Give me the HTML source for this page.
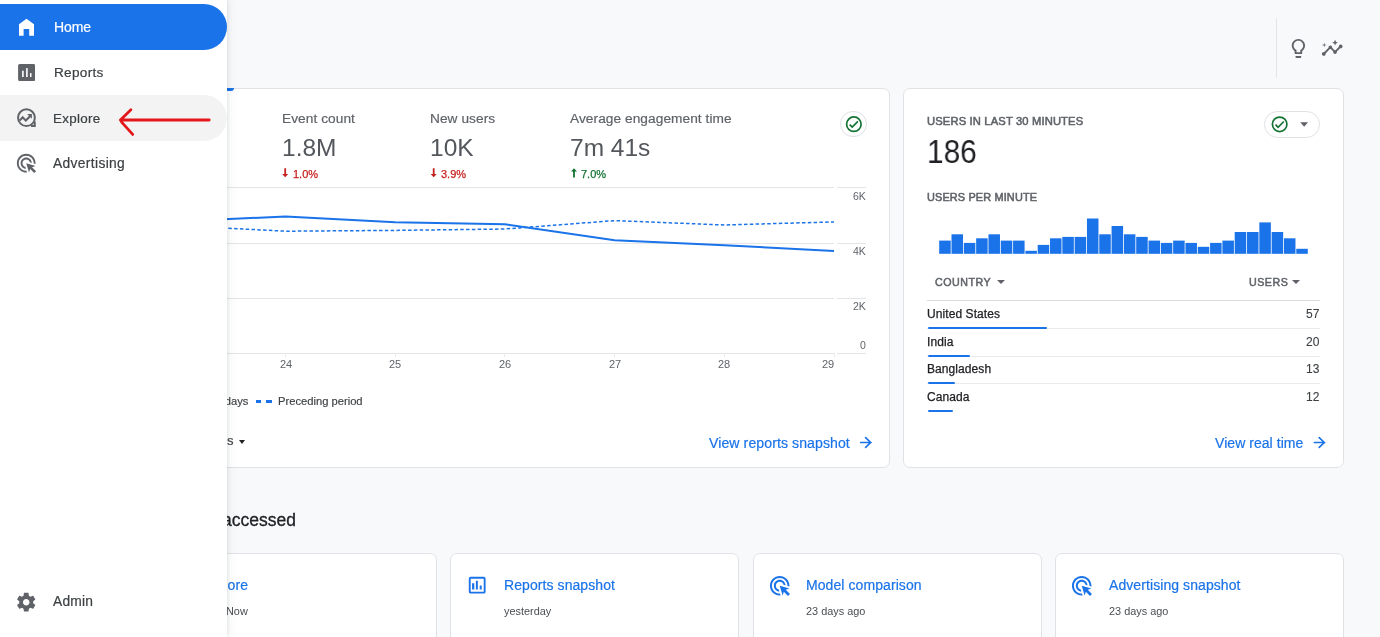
<!DOCTYPE html>
<html><head><meta charset="utf-8"><style>
html,body{margin:0;padding:0;width:1380px;height:637px;overflow:hidden;background:#f8f9fa;font-family:"Liberation Sans",sans-serif}
.t{position:absolute;line-height:1;white-space:nowrap;will-change:transform}
.card{position:absolute;background:#fff;border:1px solid #e0e2e5;border-radius:7px;box-sizing:border-box}
</style></head><body>
<div style="position:absolute;left:1276px;top:18px;width:1px;height:60px;background:#e3e4e6"></div>
<svg style="position:absolute;left:1286.55px;top:36.9px" width="22.8" height="22.8" viewBox="0 0 24 24"><path fill="#5f6368" d="M9 21c0 .55.45 1 1 1h4c.55 0 1-.45 1-1v-1H9v1zm3-19C8.14 2 5 5.14 5 9c0 2.38 1.19 4.47 3 5.74V17c0 .55.45 1 1 1h6c.55 0 1-.45 1-1v-2.26c1.81-1.27 3-3.36 3-5.74 0-3.86-3.14-7-7-7zm2.85 11.1l-.85.6V16h-4v-2.3l-.85-.6C7.8 12.16 7 10.63 7 9c0-2.76 2.24-5 5-5s5 2.24 5 5c0 1.63-.8 3.16-2.15 4.1z"/></svg>
<svg style="position:absolute;left:1321.2px;top:36.8px" width="22.5" height="22.5" viewBox="0 0 24 24"><path fill="#5f6368" d="M21 8c-1.45 0-2.26 1.44-1.93 2.51l-3.55 3.56c-.3-.09-.74-.09-1.04 0l-2.55-2.55C12.27 10.45 11.46 9 10 9c-1.45 0-2.27 1.44-1.93 2.52l-4.56 4.55C2.44 15.74 1 16.55 1 18c0 1.1.9 2 2 2 1.45 0 2.26-1.44 1.93-2.51l4.55-4.56c.3.09.74.09 1.04 0l2.55 2.55C12.73 16.55 13.54 18 15 18c1.45 0 2.27-1.44 1.93-2.52l3.56-3.55c1.07.33 2.51-.48 2.51-1.93 0-1.1-.9-2-2-2z"/><path fill="#5f6368" d="M15 9l.94-2.07L18 6l-2.06-.93L15 3l-.92 2.07L12 6l2.08.93zM3.5 11L4 9l2-.5L4 8l-.5-2L3 8l-2 .5L3 9z"/></svg>
<div class="card" style="left:147.5px;top:88px;width:742.5px;height:380px"></div>
<div style="position:absolute;left:140px;top:88px;width:94px;height:3px;background:#1a73e8;border-radius:0 0 3px 3px"></div>
<div class="t" style="left:281.60px;top:111.50px;font-size:13.7px;color:#5f6368;letter-spacing:0.06px;-webkit-text-stroke:0.2px #5f6368;">Event count</div>
<div class="t" style="left:430.10px;top:111.50px;font-size:13.7px;color:#5f6368;letter-spacing:0.06px;-webkit-text-stroke:0.2px #5f6368;">New users</div>
<div class="t" style="left:569.50px;top:111.50px;font-size:13.7px;color:#5f6368;letter-spacing:0.06px;-webkit-text-stroke:0.2px #5f6368;">Average engagement time</div>
<div class="t" style="left:281.60px;top:135.56px;font-size:24.5px;color:#53575c;">1.8M</div>
<div class="t" style="left:430.10px;top:135.56px;font-size:24.5px;color:#53575c;">10K</div>
<div class="t" style="left:569.50px;top:135.56px;font-size:24.5px;color:#53575c;">7m 41s</div>
<svg style="position:absolute;left:0;top:0" width="700" height="200"><path fill="#c5221f" d="M284.3 168.2h1.8v5.800000000000023h2.1l-3 3.3-3-3.3h2.1z"/></svg>
<div class="t" style="left:292.80px;top:169.29px;font-size:11px;color:#c5221f;-webkit-text-stroke:0.25px #c5221f;">1.0%</div>
<svg style="position:absolute;left:0;top:0" width="700" height="200"><path fill="#c5221f" d="M432.8 168.2h1.8v5.800000000000023h2.1l-3 3.3-3-3.3h2.1z"/></svg>
<div class="t" style="left:441.30px;top:169.29px;font-size:11px;color:#c5221f;-webkit-text-stroke:0.25px #c5221f;">3.9%</div>
<svg style="position:absolute;left:0;top:0" width="700" height="200"><path fill="#137333" d="M574 168.2l3 3.3h-2.1v5.900000000000017h-1.8v-5.900000000000017h-2.1z"/></svg>
<div class="t" style="left:580.80px;top:169.29px;font-size:11px;color:#137333;-webkit-text-stroke:0.25px #137333;">7.0%</div>
<div style="position:absolute;left:840.3px;top:111px;width:26.3px;height:26.3px;border:1px solid #dfe1e4;border-radius:50%;box-sizing:border-box"></div>
<svg style="position:absolute;left:840px;top:110px" width="30" height="30" viewBox="840 110 30 30"><circle cx="853.85" cy="124.2" r="7.25" fill="none" stroke="#137333" stroke-width="1.7"/><path d="M849.7 124.6L852.2 127.1L857.9 121.4" fill="none" stroke="#137333" stroke-width="1.7"/></svg>
<div style="position:absolute;left:148px;top:187px;width:686px;height:1px;background:#e4e5e6"></div>
<div style="position:absolute;left:837px;top:187px;width:29px;height:1px;background:#e4e5e6"></div>
<div style="position:absolute;left:148px;top:243px;width:686px;height:1px;background:#e4e5e6"></div>
<div style="position:absolute;left:837px;top:243px;width:29px;height:1px;background:#e4e5e6"></div>
<div style="position:absolute;left:148px;top:298px;width:686px;height:1px;background:#e4e5e6"></div>
<div style="position:absolute;left:837px;top:298px;width:29px;height:1px;background:#e4e5e6"></div>
<div style="position:absolute;left:148px;top:353px;width:686px;height:1px;background:#e4e5e6"></div>
<div style="position:absolute;left:837px;top:353px;width:29px;height:1px;background:#e4e5e6"></div>
<div class="t" style="right:513.80px;top:191.01px;font-size:10.5px;color:#5f6368;">6K</div>
<div class="t" style="right:513.80px;top:245.61px;font-size:10.5px;color:#5f6368;">4K</div>
<div class="t" style="right:513.80px;top:301.21px;font-size:10.5px;color:#5f6368;">2K</div>
<div class="t" style="right:513.80px;top:340.41px;font-size:10.5px;color:#5f6368;">0</div>
<div class="t" style="left:255.5px;width:60px;text-align:center;top:359.19px;font-size:11px;color:#5f6368">24</div>
<div style="position:absolute;left:285.0px;top:353px;width:1px;height:4px;background:#e8eaed"></div>
<div class="t" style="left:365.2px;width:60px;text-align:center;top:359.19px;font-size:11px;color:#5f6368">25</div>
<div style="position:absolute;left:394.7px;top:353px;width:1px;height:4px;background:#e8eaed"></div>
<div class="t" style="left:474.9px;width:60px;text-align:center;top:359.19px;font-size:11px;color:#5f6368">26</div>
<div style="position:absolute;left:504.4px;top:353px;width:1px;height:4px;background:#e8eaed"></div>
<div class="t" style="left:584.6px;width:60px;text-align:center;top:359.19px;font-size:11px;color:#5f6368">27</div>
<div style="position:absolute;left:614.1px;top:353px;width:1px;height:4px;background:#e8eaed"></div>
<div class="t" style="left:694.3px;width:60px;text-align:center;top:359.19px;font-size:11px;color:#5f6368">28</div>
<div style="position:absolute;left:723.8px;top:353px;width:1px;height:4px;background:#e8eaed"></div>
<div class="t" style="right:546.00px;top:359.19px;font-size:11px;color:#5f6368;">29</div>
<div style="position:absolute;left:833.5px;top:353px;width:1px;height:4px;background:#e8eaed"></div>
<svg style="position:absolute;left:0;top:0" width="1380" height="637"><polyline points="66,226.5 175.7,225.5 285.5,231.2 395.2,230.4 504.9,229 614.6,220.6 724.3,225 834,221.9" fill="none" stroke="#1a73e8" stroke-width="1.5" stroke-dasharray="3.5,2.3"/><polyline points="66,224 175.7,221.6 285.5,216.4 395.2,222.2 504.9,224.2 614.6,240.3 724.3,245.3 834,251" fill="none" stroke="#1a73e8" stroke-width="2"/></svg>
<div class="t" style="right:1131.40px;top:396.22px;font-size:11.2px;color:#3c4043;-webkit-text-stroke:0.15px #3c4043;">Last 28 days</div>
<div style="position:absolute;left:255.8px;top:400.2px;width:5.5px;height:3px;background:#1a73e8"></div><div style="position:absolute;left:266.2px;top:400.2px;width:5.8px;height:3px;background:#1a73e8"></div>
<div class="t" style="left:277.60px;top:396.22px;font-size:11.2px;color:#3c4043;-webkit-text-stroke:0.15px #3c4043;">Preceding period</div>
<div class="t" style="right:1146.50px;top:433.70px;font-size:13px;color:#3c4043;-webkit-text-stroke:0.15px #3c4043;">Last 7 days</div>
<div style="position:absolute;left:239.1px;top:439.6px;width:0;height:0;border-left:3.9px solid transparent;border-right:3.9px solid transparent;border-top:4.5px solid #202124"></div>
<div class="t" style="left:708.70px;top:436.06px;font-size:14.1px;color:#1a73e8;letter-spacing:0.08px;-webkit-text-stroke:0.2px #1a73e8;">View reports snapshot</div>
<svg style="position:absolute;left:850px;top:430px" width="30" height="25" viewBox="850 430 30 25"><path d="M860.8 442.5H871M865.6 437.6L870.7 442.5L865.6 447.4" fill="none" stroke="#1a73e8" stroke-width="1.7" stroke-linecap="round" stroke-linejoin="round"/></svg>
<div class="card" style="left:903px;top:88px;width:441px;height:380px"></div>
<div class="t" style="left:927.00px;top:115.72px;font-size:11.2px;color:#5f6368;letter-spacing:0.15px;-webkit-text-stroke:0.55px #5f6368;">USERS IN LAST 30 MINUTES</div>
<div class="t" style="left:927.00px;top:134.94px;font-size:33.5px;color:#202124;transform:scaleX(0.89);transform-origin:0 0;">186</div>
<div style="position:absolute;left:1263.8px;top:111px;width:56px;height:26.7px;border:1px solid #dfe1e4;border-radius:14px;box-sizing:border-box"></div>
<svg style="position:absolute;left:1265px;top:110px" width="50" height="30" viewBox="1265 110 50 30"><circle cx="1279.65" cy="124.3" r="7.25" fill="none" stroke="#137333" stroke-width="1.7"/><path d="M1275.5 124.7L1278.1 127.3L1283.8 121.5" fill="none" stroke="#137333" stroke-width="1.7"/><path d="M1300.2 122.3H1308.1L1304.15 126.7Z" fill="#5f6368"/></svg>
<div class="t" style="left:927.00px;top:192.07px;font-size:10.9px;color:#5f6368;letter-spacing:0.15px;-webkit-text-stroke:0.55px #5f6368;">USERS PER MINUTE</div>
<svg style="position:absolute;left:0;top:0" width="1380" height="637"><rect x="939.20" y="240.6" width="11.51" height="13.20" fill="#1a73e8"/><rect x="951.51" y="234.3" width="11.51" height="19.50" fill="#1a73e8"/><rect x="963.83" y="242.9" width="11.51" height="10.90" fill="#1a73e8"/><rect x="976.14" y="238.3" width="11.51" height="15.50" fill="#1a73e8"/><rect x="988.45" y="234.3" width="11.51" height="19.50" fill="#1a73e8"/><rect x="1000.77" y="240.6" width="11.51" height="13.20" fill="#1a73e8"/><rect x="1013.08" y="240.6" width="11.51" height="13.20" fill="#1a73e8"/><rect x="1025.39" y="250.8" width="11.51" height="3.00" fill="#1a73e8"/><rect x="1037.70" y="244.9" width="11.51" height="8.90" fill="#1a73e8"/><rect x="1050.02" y="238.3" width="11.51" height="15.50" fill="#1a73e8"/><rect x="1062.33" y="236.9" width="11.51" height="16.90" fill="#1a73e8"/><rect x="1074.64" y="236.9" width="11.51" height="16.90" fill="#1a73e8"/><rect x="1086.96" y="218.5" width="11.51" height="35.30" fill="#1a73e8"/><rect x="1099.27" y="234.3" width="11.51" height="19.50" fill="#1a73e8"/><rect x="1111.58" y="226" width="11.51" height="27.80" fill="#1a73e8"/><rect x="1123.89" y="234.3" width="11.51" height="19.50" fill="#1a73e8"/><rect x="1136.21" y="236.9" width="11.51" height="16.90" fill="#1a73e8"/><rect x="1148.52" y="240.6" width="11.51" height="13.20" fill="#1a73e8"/><rect x="1160.83" y="242.9" width="11.51" height="10.90" fill="#1a73e8"/><rect x="1173.15" y="240.6" width="11.51" height="13.20" fill="#1a73e8"/><rect x="1185.46" y="242.9" width="11.51" height="10.90" fill="#1a73e8"/><rect x="1197.77" y="246.8" width="11.51" height="7.00" fill="#1a73e8"/><rect x="1210.09" y="242.9" width="11.51" height="10.90" fill="#1a73e8"/><rect x="1222.40" y="240.6" width="11.51" height="13.20" fill="#1a73e8"/><rect x="1234.71" y="232" width="11.51" height="21.80" fill="#1a73e8"/><rect x="1247.03" y="232" width="11.51" height="21.80" fill="#1a73e8"/><rect x="1259.34" y="222.4" width="11.51" height="31.40" fill="#1a73e8"/><rect x="1271.65" y="232" width="11.51" height="21.80" fill="#1a73e8"/><rect x="1283.96" y="238.3" width="11.51" height="15.50" fill="#1a73e8"/><rect x="1296.28" y="248.8" width="11.51" height="5.00" fill="#1a73e8"/></svg>
<div class="t" style="left:934.80px;top:277.04px;font-size:10.7px;color:#5f6368;letter-spacing:0.5px;-webkit-text-stroke:0.5px #5f6368;">COUNTRY</div>
<div style="position:absolute;left:996.7px;top:280px;width:0;height:0;border-left:4px solid transparent;border-right:4px solid transparent;border-top:4px solid #5f6368"></div>
<div class="t" style="right:92.00px;top:277.04px;font-size:10.7px;color:#5f6368;letter-spacing:0.5px;-webkit-text-stroke:0.5px #5f6368;">USERS</div>
<div style="position:absolute;left:1292px;top:280px;width:0;height:0;border-left:4px solid transparent;border-right:4px solid transparent;border-top:4px solid #5f6368"></div>
<div style="position:absolute;left:927px;top:300px;width:393px;height:1px;background:#dadce0"></div>
<div class="t" style="left:927.00px;top:308.44px;font-size:12px;color:#202124;letter-spacing:0.08px;-webkit-text-stroke:0.25px #202124;">United States</div>
<div class="t" style="right:60.40px;top:308.44px;font-size:12px;color:#3c4043;-webkit-text-stroke:0.1px #3c4043;">57</div>
<div style="position:absolute;left:927px;top:328.0px;width:393px;height:1px;background:#e8eaed"></div>
<div style="position:absolute;left:928px;top:327.0px;width:118.9px;height:2px;background:#1a73e8;border-radius:1px"></div>
<div class="t" style="left:927.00px;top:336.14px;font-size:12px;color:#202124;letter-spacing:0.08px;-webkit-text-stroke:0.25px #202124;">India</div>
<div class="t" style="right:60.40px;top:336.14px;font-size:12px;color:#3c4043;-webkit-text-stroke:0.1px #3c4043;">20</div>
<div style="position:absolute;left:927px;top:355.7px;width:393px;height:1px;background:#e8eaed"></div>
<div style="position:absolute;left:928px;top:354.7px;width:41.6px;height:2px;background:#1a73e8;border-radius:1px"></div>
<div class="t" style="left:927.00px;top:363.14px;font-size:12px;color:#202124;letter-spacing:0.08px;-webkit-text-stroke:0.25px #202124;">Bangladesh</div>
<div class="t" style="right:60.40px;top:363.14px;font-size:12px;color:#3c4043;-webkit-text-stroke:0.1px #3c4043;">13</div>
<div style="position:absolute;left:927px;top:382.7px;width:393px;height:1px;background:#e8eaed"></div>
<div style="position:absolute;left:928px;top:381.7px;width:26.7px;height:2px;background:#1a73e8;border-radius:1px"></div>
<div class="t" style="left:927.00px;top:391.14px;font-size:12px;color:#202124;letter-spacing:0.08px;-webkit-text-stroke:0.25px #202124;">Canada</div>
<div class="t" style="right:60.40px;top:391.14px;font-size:12px;color:#3c4043;-webkit-text-stroke:0.1px #3c4043;">12</div>
<div style="position:absolute;left:928px;top:409.7px;width:25.0px;height:2px;background:#1a73e8;border-radius:1px"></div>
<div class="t" style="left:1214.70px;top:436.15px;font-size:14px;color:#1a73e8;letter-spacing:0.05px;-webkit-text-stroke:0.2px #1a73e8;">View real time</div>
<svg style="position:absolute;left:1300px;top:430px" width="35" height="25" viewBox="1300 430 35 25"><path d="M1314.4 442.5H1324.6M1319.2 437.6L1324.3 442.5L1319.2 447.4" fill="none" stroke="#1a73e8" stroke-width="1.7" stroke-linecap="round" stroke-linejoin="round"/></svg>
<div class="t" style="right:1083.80px;top:511.99px;font-size:17.5px;color:#202124;-webkit-text-stroke:0.3px #202124;">Recently accessed</div>
<div class="card" style="left:147.5px;top:553px;width:289px;height:100px"></div>
<div class="card" style="left:450px;top:553px;width:289px;height:100px"></div>
<div class="card" style="left:752.5px;top:553px;width:289px;height:100px"></div>
<div class="card" style="left:1055px;top:553px;width:289px;height:100px"></div>
<div class="t" style="right:1131.60px;top:577.95px;font-size:14px;color:#1a73e8;letter-spacing:0.08px;-webkit-text-stroke:0.2px #1a73e8;">Explore</div>
<div class="t" style="right:1132.00px;top:605.57px;font-size:10.9px;color:#4a4e52;">Now</div>
<svg style="position:absolute;left:466.3px;top:574.3px" width="22.4" height="22.4" viewBox="0 0 24 24"><path fill="#1a73e8" d="M19 3H5c-1.1 0-2 .9-2 2v14c0 1.1.9 2 2 2h14c1.1 0 2-.9 2-2V5c0-1.1-.9-2-2-2zm0 16H5V5h14v14z"/><path fill="#1a73e8" d="M6.5 10h2.4v6.5H6.5zM10.6 7.3h2.1v9.2h-2.1zM14.7 12.4h2.1v4.1h-2.1z"/></svg>
<div class="t" style="left:504.00px;top:577.95px;font-size:14px;color:#1a73e8;letter-spacing:0.08px;-webkit-text-stroke:0.2px #1a73e8;">Reports snapshot</div>
<div class="t" style="left:504.00px;top:605.57px;font-size:10.9px;color:#4a4e52;">yesterday</div>
<svg style="position:absolute;left:768.25px;top:574.05px" width="23.4" height="23.4" viewBox="0 0 24 24"><path fill="#1a73e8" d="M11.71 17.99C8.53 17.84 6 15.22 6 12c0-3.31 2.69-6 6-6 3.22 0 5.84 2.53 5.99 5.71l-2.1-.63C15.48 9.31 13.89 8 12 8c-2.21 0-4 1.79-4 4 0 1.89 1.31 3.48 3.08 3.89l.63 2.1zM22 12c0 .3-.01.6-.04.9l-1.97-.59c.01-.1.01-.21.01-.31 0-4.42-3.58-8-8-8s-8 3.58-8 8 3.58 8 8 8c.1 0 .21 0 .31-.01l.59 1.97c-.3.03-.6.04-.9.04-5.52 0-10-4.48-10-10S6.48 2 12 2s10 4.48 10 10zm-3.77 4.26L22 15l-10-3 3 10 1.26-3.77 4.27 4.27 1.98-1.98-4.28-4.26z"/></svg>
<div class="t" style="left:806.30px;top:577.95px;font-size:14px;color:#1a73e8;letter-spacing:0.08px;-webkit-text-stroke:0.2px #1a73e8;">Model comparison</div>
<div class="t" style="left:806.30px;top:605.57px;font-size:10.9px;color:#4a4e52;">23 days ago</div>
<svg style="position:absolute;left:1070.25px;top:574.05px" width="23.4" height="23.4" viewBox="0 0 24 24"><path fill="#1a73e8" d="M11.71 17.99C8.53 17.84 6 15.22 6 12c0-3.31 2.69-6 6-6 3.22 0 5.84 2.53 5.99 5.71l-2.1-.63C15.48 9.31 13.89 8 12 8c-2.21 0-4 1.79-4 4 0 1.89 1.31 3.48 3.08 3.89l.63 2.1zM22 12c0 .3-.01.6-.04.9l-1.97-.59c.01-.1.01-.21.01-.31 0-4.42-3.58-8-8-8s-8 3.58-8 8 3.58 8 8 8c.1 0 .21 0 .31-.01l.59 1.97c-.3.03-.6.04-.9.04-5.52 0-10-4.48-10-10S6.48 2 12 2s10 4.48 10 10zm-3.77 4.26L22 15l-10-3 3 10 1.26-3.77 4.27 4.27 1.98-1.98-4.28-4.26z"/></svg>
<div class="t" style="left:1108.70px;top:577.95px;font-size:14px;color:#1a73e8;letter-spacing:0.08px;-webkit-text-stroke:0.2px #1a73e8;">Advertising snapshot</div>
<div class="t" style="left:1108.70px;top:605.57px;font-size:10.9px;color:#4a4e52;">23 days ago</div>
<div style="position:absolute;left:0;top:0;width:227px;height:637px;background:#fff;box-shadow:0 0 10px rgba(60,64,67,0.12), 1px 0 3px rgba(60,64,67,0.07)"></div>
<div style="position:absolute;left:0;top:4.2px;width:227px;height:45.5px;background:#1a73e8;border-radius:0 23px 23px 0"></div>
<div style="position:absolute;left:0;top:95.3px;width:227px;height:45.3px;background:#f3f3f3;border-radius:0 23px 23px 0"></div>
<svg style="position:absolute;left:17px;top:16px" width="20" height="22" viewBox="0 0 20 22"><path fill="#fff" d="M9.5 2.8L2 8.3V19.8h4.6v-6.8h5.6v6.8H17V8.3z"/></svg>
<div class="t" style="left:53.70px;top:20.45px;font-size:14px;color:#fff;letter-spacing:-0.1px;-webkit-text-stroke:0.2px #fff;">Home</div>
<svg style="position:absolute;left:17.9px;top:64px" width="17.2" height="17" viewBox="0 0 17 17"><rect x="0" y="0" width="17" height="17" rx="1.5" fill="#5f6368"/><rect x="4" y="6.7" width="1.6" height="6.3" fill="#fff"/><rect x="8" y="4.1" width="1.6" height="8.9" fill="#fff"/><rect x="11.9" y="9.1" width="1.5" height="3.9" fill="#fff"/></svg>
<div class="t" style="left:53.50px;top:65.79px;font-size:13.6px;color:#3c4043;letter-spacing:0.3px;-webkit-text-stroke:0.2px #3c4043;">Reports</div>
<svg style="position:absolute;left:10px;top:100px" width="35" height="35" viewBox="10 100 35 35"><circle cx="26.45" cy="117.65" r="8.4" fill="none" stroke="#5f6368" stroke-width="2"/><path fill="none" stroke="#5f6368" stroke-width="2" d="M34.75 121.5V126.05H31"/><path fill="none" stroke="#5f6368" stroke-width="2.1" d="M19.6 120.6l3.1-3.3 3.1 3.3 4.3-4.3"/><path fill="#5f6368" d="M27.1 114H31.9V118.8Z"/></svg>
<div class="t" style="left:53.40px;top:112.06px;font-size:13.4px;color:#3c4043;letter-spacing:0.3px;-webkit-text-stroke:0.2px #3c4043;">Explore</div>
<svg style="position:absolute;left:15.23px;top:151.9px" width="22.44" height="22.44" viewBox="0 0 24 24"><path fill="#5f6368" d="M11.71 17.99C8.53 17.84 6 15.22 6 12c0-3.31 2.69-6 6-6 3.22 0 5.84 2.53 5.99 5.71l-2.1-.63C15.48 9.31 13.89 8 12 8c-2.21 0-4 1.79-4 4 0 1.89 1.31 3.48 3.08 3.89l.63 2.1zM22 12c0 .3-.01.6-.04.9l-1.97-.59c.01-.1.01-.21.01-.31 0-4.42-3.58-8-8-8s-8 3.58-8 8 3.58 8 8 8c.1 0 .21 0 .31-.01l.59 1.97c-.3.03-.6.04-.9.04-5.52 0-10-4.48-10-10S6.48 2 12 2s10 4.48 10 10zm-3.77 4.26L22 15l-10-3 3 10 1.26-3.77 4.27 4.27 1.98-1.98-4.28-4.26z"/></svg>
<div class="t" style="left:53.40px;top:156.82px;font-size:13.8px;color:#3c4043;letter-spacing:0.35px;-webkit-text-stroke:0.2px #3c4043;">Advertising</div>
<svg style="position:absolute;left:15.23px;top:590.8px" width="22.44" height="22.44" viewBox="0 0 24 24"><path fill="#5f6368" d="M19.43 12.98c.04-.32.07-.64.07-.98s-.03-.66-.07-.98l2.11-1.65c.19-.15.24-.42.12-.64l-2-3.46c-.12-.22-.39-.3-.61-.22l-2.49 1c-.52-.4-1.08-.73-1.69-.98l-.38-2.65C14.46 2.18 14.25 2 14 2h-4c-.25 0-.46.18-.49.42l-.38 2.65c-.61.25-1.17.59-1.69.98l-2.49-1c-.23-.09-.49 0-.61.22l-2 3.46c-.13.22-.07.49.12.64l2.11 1.65c-.04.32-.07.65-.07.98s.03.66.07.98l-2.11 1.65c-.19.15-.24.42-.12.64l2 3.46c.12.22.39.3.61.22l2.49-1c.52.4 1.08.73 1.69.98l.38 2.65c.03.24.24.42.49.42h4c.25 0 .46-.18.49-.42l.38-2.65c.61-.25 1.17-.59 1.69-.98l2.49 1c.23.09.49 0 .61-.22l2-3.46c.12-.22.07-.49-.12-.64l-2.11-1.65zM12 15.5c-1.93 0-3.5-1.57-3.5-3.5s1.57-3.5 3.5-3.5 3.5 1.57 3.5 3.5-1.57 3.5-3.5 3.5z"/></svg>
<div class="t" style="left:53.30px;top:594.52px;font-size:13.8px;color:#3c4043;letter-spacing:0.2px;-webkit-text-stroke:0.2px #3c4043;">Admin</div>
<svg style="position:absolute;left:0;top:0" width="227" height="637"><path d="M209.2 120H120.6 M130.9 109.8L120.4 120L122.3 122.9L132.7 134.4" fill="none" stroke="#e3171b" stroke-width="2.8" stroke-linecap="round" stroke-linejoin="round"/></svg>
</body></html>
